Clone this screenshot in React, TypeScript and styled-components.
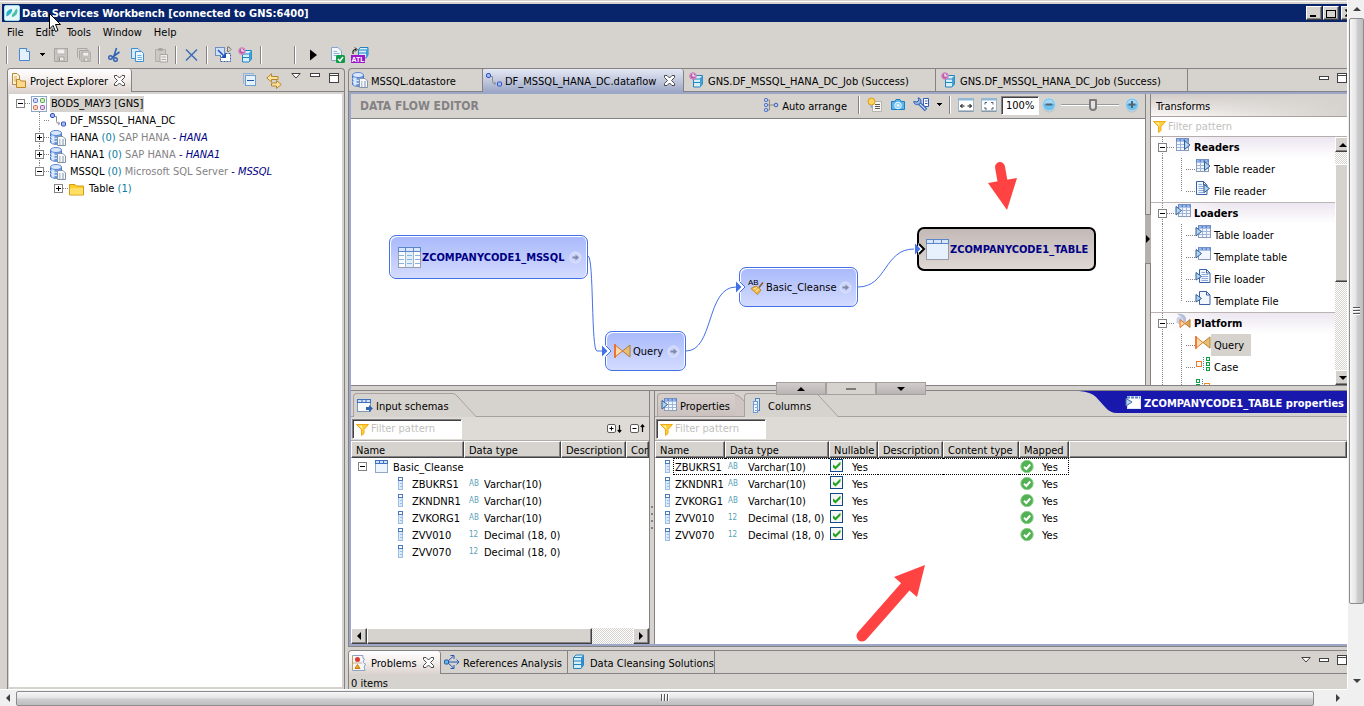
import React from "react";
import styled, { createGlobalStyle, css } from "styled-components";

const FACE = "#d6d3ce";
const LINE = "#848284";
const BLUE = "#9ca6c6";
const FONT = `"DejaVu Sans Condensed", "DejaVu Sans", sans-serif`;

const Global = createGlobalStyle`
  *, *::before, *::after { box-sizing: border-box; }
  html, body, #root { height: 100%; margin: 0; }
  body { overflow: hidden; font-family: ${FONT}; font-stretch: condensed; font-size: 11px; line-height: 16px; color: #000; background: #f0f0f0; }
  button, input { font: inherit; color: inherit; margin: 0; padding: 0; border: 0; background: none; border-radius: 0; }
  svg { display: block; flex: none; }
  table { border-collapse: separate; border-spacing: 0; table-layout: fixed; }
`;

const raised = css`
  background: ${FACE};
  border: 1px solid;
  border-color: #fff #424142 #424142 #fff;
  box-shadow: inset -1px -1px ${LINE};
`;
const dotsV = "repeating-linear-gradient(#848284 0 1px, transparent 1px 2px)";
const dotsH = "repeating-linear-gradient(90deg, #848284 0 1px, transparent 1px 2px)";

/* text beside an icon: sits slightly lower than the icon's middle */
const Text = styled.span`
  padding-top: 2px;
  line-height: 15px;
  white-space: nowrap;
`;

/* ---------- window frame ---------- */
const Frame = styled.div`
  display: grid;
  grid-template-columns: minmax(0, 1fr) 17px;
  grid-template-rows: minmax(0, 1fr) 17px;
  height: 100vh;
`;
const Main = styled.main`
  position: relative;
  display: flex;
  flex-direction: column;
  min-height: 0;
  padding: 4px 0 0 2px;
  background: ${FACE};
  box-shadow: inset 0 1px ${FACE}, inset 0 2px #fff;
  overflow: hidden;
`;
const TitleBar = styled.header`
  display: flex;
  align-items: center;
  flex: none;
  height: 18px;
  background: #08246b;
  color: #fff;
`;
const Title = styled.h1`
  flex: 1;
  margin: 0 0 0 2px;
  padding-top: 2px;
  font-size: 11px;
  line-height: 16px;
  white-space: nowrap;
`;
const WinButtons = styled.div`
  display: flex;
  gap: 1px;
  margin-right: -10px;
`;
const WinButton = styled.button<{ $gap?: boolean }>`
  ${raised}
  display: grid;
  place-items: center;
  width: 16px;
  height: 14px;
  margin-left: ${(p) => (p.$gap ? 1 : 0)}px;
`;
const MenuBar = styled.nav`
  display: flex;
  flex: none;
  gap: 12px;
  height: 20px;
  padding: 2px 0 0 5px;
  align-items: center;
`;
const ToolBar = styled.div`
  display: flex;
  flex: none;
  align-items: center;
  height: 26px;
  padding-left: 1px;
`;
const ToolButton = styled.button<{ $w?: number }>`
  display: grid;
  place-items: center;
  width: ${(p) => p.$w ?? 23}px;
  height: 22px;
`;
const Divider = styled.span`
  flex: none;
  width: 2px;
  height: 18px;
  margin: 0 3px;
  border-left: 1px solid ${LINE};
  border-right: 1px solid #fff;
`;
const Spacer = styled.span<{ $w?: number }>`
  flex: ${(p) => (p.$w ? `0 0 ${p.$w}px` : "1 1 0")};
`;
const Workspace = styled.div`
  display: flex;
  flex: 1;
  gap: 3px;
  min-height: 0;
  padding-left: 5px;
`;

/* ---------- panels and tabs ---------- */
const Panel = styled.section`
  display: flex;
  flex-direction: column;
  min-width: 0;
  min-height: 0;
  border: 1px solid ${LINE};
  border-bottom: 0;
  border-radius: 4px 4px 0 0;
`;
const Explorer = styled(Panel)`
  flex: 0 0 338px;
`;
const RightColumn = styled.div`
  display: flex;
  flex: 1;
  flex-direction: column;
  gap: 3px;
  min-width: 0;
`;
const TabStrip = styled.div`
  display: flex;
  flex: none;
  height: 23px;
`;
const Tab = styled.button<{ $w: number; $look?: "soft" | "blue"; $pad?: number }>`
  display: flex;
  align-items: center;
  gap: 3px;
  flex: 0 0 ${(p) => p.$w}px;
  padding-left: ${(p) => p.$pad ?? 3}px;
  border-right: 1px solid ${LINE};
  border-bottom: 1px solid ${LINE};
  white-space: nowrap;
  ${(p) =>
    p.$look === "soft" &&
    css`
      background: linear-gradient(#fff, #f4efed 45%, #dcd3cf);
      border-radius: 3px 3px 0 0;
      border-bottom: 0;
    `}
  ${(p) =>
    p.$look === "blue" &&
    css`
      background: linear-gradient(#e4e8f4, #c2c9de 50%, ${BLUE});
      border-bottom: 0;
      border-radius: 3px 3px 0 0;
    `}
`;
const TabClose = styled.span<{ $gap?: number }>`
  margin-left: ${(p) => p.$gap ?? 3}px;
`;
const StripRest = styled.div`
  display: flex;
  flex: 1;
  justify-content: flex-end;
  align-items: flex-start;
  gap: 9px;
  padding: 4px 5px 0 0;
  border-bottom: 1px solid ${LINE};
`;
const ViewButton = styled.button`
  display: block;
`;
const CutEdge = styled.div`
  display: flex;
  gap: 8px;
  margin-right: -5px;
`;

/* ---------- project explorer tree ---------- */
const ExplorerBody = styled.div`
  flex: 1;
  padding: 2px 2px 2px 1px;
`;
const Tree = styled.ul`
  height: 100%;
  margin: 0;
  padding: 1px 0 0 7px;
  list-style: none;
  background: #fff;
`;
const TreeRow = styled.li<{ $indent: number }>`
  display: flex;
  align-items: center;
  height: 17px;
  padding-left: ${(p) => p.$indent}px;
  white-space: nowrap;
`;
const Guide = styled.span<{ $line?: "full" | "top" }>`
  display: grid;
  place-items: center;
  flex: none;
  width: 9px;
  height: 100%;
  background: ${(p) => (p.$line ? `${dotsV} center top / 1px ${p.$line === "top" ? "50%" : "100%"} no-repeat` : "none")};
`;
const Dots = styled.span<{ $w: number }>`
  flex: 0 0 ${(p) => p.$w}px;
  height: 1px;
  background: ${dotsH};
`;
const TreeLabel = styled.span<{ $selected?: boolean }>`
  margin-left: 3px;
  padding: 0 1px;
  background: ${(p) => (p.$selected ? FACE : "none")};
`;
const Count = styled.span`
  color: #087da5;
`;
const Kind = styled.span`
  color: ${LINE};
`;
const Config = styled.span`
  color: #000084;
`;

/* ---------- editor ---------- */
const Editor = styled(Panel)`
  flex: 1;
  border-right: 0;
  border-bottom: 1px solid ${LINE};
  border-radius: 4px 0 0 0;
`;
const EditorFrame = styled.div`
  display: flex;
  flex: 1;
  flex-direction: column;
  min-height: 0;
  border: 2px solid ${BLUE};
  border-right: 0;
`;
const TopSplit = styled.div`
  display: flex;
  flex: 1;
  min-height: 0;
  border-bottom: 1px solid ${LINE};
`;
const FlowColumn = styled.div`
  display: flex;
  flex: 1;
  flex-direction: column;
  min-width: 0;
`;
const FlowHeader = styled.div`
  display: flex;
  flex: none;
  align-items: center;
  height: 25px;
  padding: 0 5px 2px 9px;
  border-bottom: 1px solid ${LINE};
`;
const FlowTitle = styled.h2`
  flex: 1;
  margin: 0;
  padding-top: 2px;
  font-size: 12px;
  color: ${LINE};
`;
const ArrangeButton = styled.button`
  display: flex;
  align-items: center;
  gap: 3px;
  margin-right: 8px;
`;
const ZoomBox = styled.input`
  width: 38px;
  height: 19px;
  margin: 0 2px 0 1px !important;
  padding-left: 4px !important;
  background: #fff !important;
  border: 1px solid !important;
  border-color: ${LINE} #fff #fff ${LINE} !important;
  box-shadow: inset 1px 1px #424142;
`;
const RoundButton = styled.button`
  display: block;
`;
const ZoomSlider = styled.input`
  appearance: none;
  width: 58px;
  height: 16px;
  margin: 0 5px 0 4px !important;
  background: linear-gradient(#9a9a9a 0 1px, #fff 1px 2px) center / 100% 2px no-repeat !important;
  &::-webkit-slider-thumb {
    appearance: none;
    width: 8px;
    height: 12px;
    border: 2px solid #7c7c7c;
    border-radius: 1px 1px 4px 4px;
    background: #e2e2e2;
  }
`;
const Canvas = styled.div`
  position: relative;
  flex: 1;
  min-height: 0;
  overflow: hidden;
  background: #fff;
`;
const Wires = styled.svg`
  position: absolute;
  top: 0;
  left: 0;
`;
const Node = styled.div<{ $x: number; $y: number; $w: number; $h: number; $selected?: boolean }>`
  position: absolute;
  left: ${(p) => p.$x}px;
  top: ${(p) => p.$y}px;
  display: flex;
  align-items: center;
  width: ${(p) => p.$w}px;
  height: ${(p) => p.$h}px;
  padding-left: 8px;
  border-radius: 7px;
  white-space: nowrap;
  ${(p) =>
    p.$selected
      ? css`
          border: 2px solid #000;
          background: linear-gradient(#c3bab7, #ded7d4);
          padding-left: 7px;
        `
      : css`
          border: 1px solid #4271e7;
          background: linear-gradient(#a9b9fb, #d3dbfe);
          box-shadow: inset 1px 1px #fff, inset -1px 0 #fff;
        `}
`;
const NodeName = styled.span<{ $table?: boolean }>`
  flex: 1;
  margin-left: ${(p) => (p.$table ? 1 : 2)}px;
  padding-top: 2px;
  color: ${(p) => (p.$table ? "#000084" : "#000")};
  font-weight: ${(p) => (p.$table ? 700 : 400)};
`;
const Notch = styled.svg`
  position: absolute;
  left: -6px;
  top: 50%;
  margin-top: -8px;
`;
const Port = styled.svg`
  margin-right: 5px;
`;

/* ---------- transforms palette ---------- */
const SideSash = styled.div`
  position: relative;
  flex: 0 0 6px;
  border-left: 1px solid ${LINE};
  border-right: 1px solid ${LINE};
`;
const SashHandle = styled.button`
  position: absolute;
  left: -1px;
  top: 120px;
  display: grid;
  place-items: center;
  width: 6px;
  height: 50px;
  background: #b4b0ae;
  border-top: 1px solid ${LINE};
  border-bottom: 1px solid ${LINE};
`;
const Palette = styled.aside`
  display: flex;
  flex: 0 0 196px;
  flex-direction: column;
  min-height: 0;
  background: #fff;
`;
const PaletteTitle = styled.h2`
  flex: none;
  margin: 0;
  height: 23px;
  padding-left: 5px;
  font-size: 11px;
  font-weight: 400;
  line-height: 26px;
  background: linear-gradient(90deg, transparent, ${FACE}), linear-gradient(#d2cbc7, #fbf8f7);
  border-bottom: 1px solid #a9a29e;
`;
const Filter = styled.label<{ $boxed?: boolean }>`
  display: flex;
  align-items: center;
  flex: none;
  gap: 2px;
  height: 20px;
  padding-left: 2px;
  background: #fff;
  input {
    min-width: 0;
    width: 100%;
    height: 16px;
    outline: 0;
  }
  input::placeholder {
    color: #c2bfbd;
    opacity: 1;
  }
  ${(p) =>
    p.$boxed
      ? css`
          width: 110px;
          padding: 1px 0 0 3px;
          border: 1px solid;
          border-color: ${LINE} #fff #fff ${LINE};
          box-shadow: inset 1px 1px #424142;
        `
      : css`
          border-bottom: 1px solid #b5aead;
        `}
`;
const PaletteScroll = styled.div`
  display: flex;
  flex: 1;
  min-height: 0;
  overflow: hidden;
`;
const PaletteTree = styled.ul`
  flex: 1;
  margin: -1px 0 0;
  padding: 0;
  list-style: none;
`;
const PaletteRow = styled.li<{ $group?: boolean }>`
  display: flex;
  align-items: center;
  height: 22px;
  padding-left: 7px;
  white-space: nowrap;
  ${(p) =>
    p.$group &&
    css`
      font-weight: 700;
      border-top: 1px solid #bab5b3;
      background: linear-gradient(90deg, #fff, transparent 40%), linear-gradient(#ece6f0, #fff);
    `}
`;
const PaletteLabel = styled.span<{ $selected?: boolean }>`
  height: 22px;
  padding: 0 7px 0 3px;
  line-height: 24px;
  background: ${(p) => (p.$selected ? FACE : "none")};
`;
const GroupLabel = styled.span`
  margin-left: 3px;
`;
const IconLift = styled.span`
  padding-bottom: 6px;
`;
const ScrollV = styled.div`
  display: flex;
  flex: 0 0 12px;
  flex-direction: column;
  overflow: hidden;
  background: conic-gradient(${FACE} 25%, #fff 0 50%, ${FACE} 0 75%, #fff 0) 0 0 / 2px 2px;
`;
const ScrollH = styled.div`
  display: flex;
  flex: none;
  height: 16px;
  background: conic-gradient(${FACE} 25%, #fff 0 50%, ${FACE} 0 75%, #fff 0) 0 0 / 2px 2px;
`;
const ScrollButton = styled.button`
  ${raised}
  display: grid;
  place-items: center;
  flex: none;
  width: 16px;
  height: 15px;
`;
const ScrollButtonH = styled(ScrollButton)`
  height: 16px;
`;
const ThumbV = styled.div`
  ${raised}
  flex: 0 0 118px;
  width: 16px;
  margin: 12px 0 auto;
`;
const ThumbH = styled.div`
  ${raised}
  flex: 1;
  margin-right: 41px;
`;

/* ---------- lower split ---------- */
const MainSash = styled.div`
  position: relative;
  flex: 0 0 5px;
  border-bottom: 1px solid ${LINE};
`;
const SashButtons = styled.div`
  position: absolute;
  z-index: 2;
  left: 425px;
  top: -4px;
  display: flex;
`;
const SashButton = styled.button<{ $flat?: boolean }>`
  display: grid;
  place-items: center;
  width: 50px;
  height: 13px;
  border: 1px solid #a5a09e;
  background: ${(p) => (p.$flat ? FACE : "linear-gradient(#d2cccb, #b9b4b3)")};
`;
const LowerSplit = styled.div`
  display: flex;
  flex: 0 0 253px;
`;
const Pane = styled.section`
  position: relative;
  display: flex;
  flex-direction: column;
  min-width: 0;
  overflow: hidden;
  background: #fff;
`;
const SchemaPane = styled(Pane)`
  flex: 0 0 298px;
`;
const ColumnPane = styled(Pane)`
  flex: 1;
`;
const SmallSash = styled.div`
  display: grid;
  place-items: center;
  flex: 0 0 6px;
  border-left: 1px solid ${LINE};
  border-right: 1px solid ${LINE};
`;
const Grip = styled.span`
  width: 2px;
  height: 24px;
  background: repeating-linear-gradient(${LINE} 0 2px, transparent 2px 7px);
`;
const SlantStrip = styled.div`
  display: flex;
  align-items: flex-end;
  flex: none;
  height: 26px;
  padding-left: 2px;
  background: linear-gradient(#a7a09e, #a7a09e) bottom / 100% 1px no-repeat ${FACE};
`;
const SlantTab = styled.button<{ $w: number; $front?: boolean }>`
  display: flex;
  align-items: center;
  gap: 3px;
  width: ${(p) => p.$w}px;
  height: ${(p) => (p.$front ? 24 : 23)}px;
  padding-left: 3px;
  margin-bottom: ${(p) => (p.$front ? 0 : 1)}px;
  border: 1px solid #a7a09e;
  border-width: 1px 0 0 1px;
  border-radius: 4px 0 0 0;
  white-space: nowrap;
  background: ${(p) => (p.$front ? FACE : "linear-gradient(#d8d0cd, #cbc2bf)")};
`;
const Banner = styled.div`
  display: flex;
  align-items: center;
  align-self: flex-start;
  height: 22px;
  margin-left: auto;
`;
const BannerText = styled.h2`
  display: flex;
  align-items: center;
  gap: 3px;
  margin: 0;
  height: 22px;
  padding: 0 3px 0 8px;
  font-size: 11px;
  color: #fff;
  background: #1818ad;
  white-space: nowrap;
`;
const FilterRow = styled.div`
  display: flex;
  align-items: center;
  flex: none;
  gap: 8px;
  height: 24px;
  padding: 0 4px 0 1px;
  background: #dedbd6;
  border-bottom: 1px solid #b0aaa8;
`;
const GridTable = styled.table<{ $w?: number }>`
  width: ${(p) => (p.$w ? `${p.$w}px` : "100%")};
  th {
    ${raised}
    height: 17px;
    padding: 2px 0 0 4px;
    font-weight: 400;
    line-height: 13px;
    text-align: left;
    white-space: nowrap;
    overflow: hidden;
  }
  td {
    height: 17px;
    padding: 0;
    white-space: nowrap;
  }
`;
const TableSlot = styled.div`
  flex: 1;
  min-height: 0;
  overflow: hidden;
`;
const Cell = styled.div<{ $pad?: number }>`
  display: flex;
  align-items: center;
  height: 17px;
  padding-left: ${(p) => p.$pad ?? 0}px;
`;
const FieldName = styled(Text)<{ $gap: number }>`
  margin-left: ${(p) => p.$gap}px;
`;
const FocusRow = styled.tr<{ $focus?: boolean }>`
  ${(p) =>
    p.$focus &&
    css`
      td {
        border-top: 1px dotted #000;
        border-bottom: 1px dotted #000;
      }
      td:first-child {
        border-color: transparent;
      }
      td:last-child {
        border-right: 1px dotted #000;
      }
      td > div {
        height: 15px;
      }
    `}
`;
const FocusName = styled.span<{ $focus?: boolean }>`
  flex: none;
  margin-left: 3px;
  padding: 1px 0 0 1px;
  height: 17px;
  width: 52px;
  border: ${(p) => (p.$focus ? "1px dotted #000" : "1px solid transparent")};
  border-right: 0;
  line-height: 15px;
`;
const TypeMark = styled.span`
  width: 15px;
  font-size: 8px;
  line-height: 14px;
  color: #5aa0b5;
`;
const Check = styled.input`
  appearance: none;
  display: grid;
  place-items: center;
  width: 13px;
  height: 13px;
  margin: 0 9px 2px 1px !important;
  border: 1px solid #10498c !important;
  background: #f5f5f3 !important;
  &:checked::before {
    content: "";
    width: 8px;
    height: 8px;
    background: #21a221;
    clip-path: polygon(0 30%, 38% 62%, 100% 0, 100% 38%, 38% 100%, 0 68%);
  }
`;

/* ---------- problems ---------- */
const Problems = styled(Panel)`
  flex: 0 0 39px;
  border-right: 0;
  border-radius: 4px 0 0 0;
`;
const Items = styled.p`
  margin: 0;
  padding: 2px 0 0 2px;
`;

/* ---------- outer scroll bars ---------- */
const OuterV = styled.div`
  display: flex;
  flex-direction: column;
  align-items: flex-end;
  background: #f0f0f0;
  border-left: 1px solid #fff;
`;
const OuterH = styled.div`
  display: flex;
  align-items: center;
  min-width: 0;
  background: #f0f0f0;
  border-top: 1px solid #fff;
`;
const OuterArrow = styled.button<{ $w: number; $h: number }>`
  display: grid;
  place-items: center;
  flex: none;
  width: ${(p) => p.$w}px;
  height: ${(p) => p.$h}px;
`;
const OuterThumb = styled.div<{ $side?: boolean }>`
  display: flex;
  align-items: center;
  justify-content: center;
  border: 1px solid #8c8c8e;
  border-radius: 2px;
  ${(p) =>
    p.$side
      ? css`
          flex: 586 0 0;
          width: 15px;
          background: linear-gradient(90deg, #f7f7f7, #e3e3e4 48%, #cfcfd1 52%, #bebec1);
        `
      : css`
          flex: 1299 0 0;
          height: 15px;
          background: linear-gradient(#f7f7f7, #e3e3e4 48%, #cfcfd1 52%, #bebec1);
        `}
`;
const OuterRest = styled.span<{ $n: number }>`
  flex: ${(p) => p.$n} 0 0;
`;
const Pointer = styled.svg`
  position: absolute;
  left: 49px;
  top: 13px;
  z-index: 5;
`;
const RedArrow = styled.svg<{ $x: number; $y: number }>`
  position: absolute;
  left: ${(p) => p.$x}px;
  top: ${(p) => p.$y}px;
  pointer-events: none;
`;

/* ---------- icons ---------- */
type IconProps = { children: React.ReactNode; w?: number; h?: number; crisp?: boolean };
const Icon = ({ children, w = 16, h = 16, crisp }: IconProps) => (
  <svg width={w} height={h} viewBox={`0 0 ${w} ${h}`} fill="none" aria-hidden="true" shapeRendering={crisp ? "crispEdges" : undefined}>
    {children}
  </svg>
);
const Logo = () => (
  <Icon>
    <rect x=".5" y=".5" width="15" height="15" rx="1.5" fill="#e6f7fb" stroke="#9fd8e8" />
    <path d="M2.500 11.500C1.500 7 4 4.500 8 4 8.500 6.500 7 8 6 9 5 10 4 11 2.500 11.500Z" fill="#29b0c9" />
    <path d="M8 12C7.500 9 9 8.500 10 7.500 11 6.500 11 4 13 3.500 14.500 8 12 11.500 8 12Z" fill="#4fc0a8" />
  </Icon>
);
const Caret = () => (
  <Icon w={7} h={4} crisp>
    <path d="M1 0H6L3.500 3Z" fill="#000" />
  </Icon>
);
const Tri = ({ d, c = "#000" }: { d: "up" | "down" | "left" | "right"; c?: string }) => {
  const p = { up: "M0 6L4 2 8 6Z", down: "M0 2H8L4 6Z", left: "M6 0V8L2 4Z", right: "M2 0V8L6 4Z" }[d];
  return (
    <Icon w={8} h={8}>
      <path d={p} fill={c} />
    </Icon>
  );
};
const CloseX = () => (
  <Icon w={11} h={11}>
    <path d="M.5.5H3L5.500 3 8 .5H10.500V2.500L7.500 5.500 10.500 8.500V10.500H8L5.500 8 3 10.500H.5V8.500L3.500 5.500.5 2.500Z" fill="#fff" stroke="#4a494a" />
  </Icon>
);
const MenuTri = () => (
  <Icon w={10} h={6}>
    <path d="M.8.5H9.200L5 5Z" fill="#fff" stroke="#424142" />
  </Icon>
);
const MinBox = () => (
  <Icon w={10} h={5} crisp>
    <rect x=".5" y=".5" width="9" height="3" fill="#fff" stroke="#424142" />
  </Icon>
);
const MaxBox = () => (
  <Icon w={10} h={10} crisp>
    <path d="M.5.5H9.500V9.500H.5ZM.5 2.500H9.500" fill="#fff" stroke="#424142" />
  </Icon>
);
const PageIcon = () => (
  <Icon>
    <path d="M2.500 1.500H9.500L12.500 4.500V13.500H2.500Z" fill="#e3f1fd" stroke="#4a86cd" />
    <path d="M9.500 1.500V4.500H12.500" fill="#fff" stroke="#4a86cd" />
  </Icon>
);
const Floppy = ({ many }: { many?: boolean }) => (
  <Icon>
    {many && <path d="M1.500 10.500V1.500H11V3M3.500 12.500V3.500H13" stroke="#a9a6a3" />}
    <g transform={many ? "translate(4 4) scale(.72)" : undefined}>
      <path d="M1.500 1.500H14.500V14.500H1.500Z" fill="#c9c6c2" stroke="#a5a29f" />
      <path d="M4 2H12V7H4Z" fill="#f2f0ee" stroke="#b5b2af" />
      <path d="M5 10H11V14H5Z" fill="#eceae7" stroke="#a5a29f" />
      <path d="M6.500 11V13.500" stroke="#8d8a87" />
    </g>
  </Icon>
);
const Scissors = () => (
  <Icon>
    <path d="M9.500 1 6.500 10.500M12.500 5 5 10.500" stroke="#2f62b5" strokeWidth="1.600" />
    <circle cx="3.500" cy="10.500" r="1.800" stroke="#2f62b5" strokeWidth="1.400" />
    <circle cx="8.500" cy="12.500" r="1.800" stroke="#2f62b5" strokeWidth="1.400" />
  </Icon>
);
const CopyIcon = () => (
  <Icon>
    <path d="M1.500 1.500H8L10.500 4V11.500H1.500Z" fill="#d8ebfb" stroke="#3f8fd0" />
    <path d="M5.500 4.500H11.500L13.500 6.500V14.500H5.500Z" fill="#eaf5fe" stroke="#3f8fd0" />
    <path d="M7.500 8.500H11.500M7.500 10.500H12M7.500 12.500H12" stroke="#6fb1e0" />
  </Icon>
);
const PasteIcon = () => (
  <Icon>
    <path d="M2.500 2.500H12.500V14.500H2.500Z" fill="#cbc8c4" stroke="#b0ada9" />
    <path d="M5.500 1H9.500V4H5.500Z" fill="#a9a6a2" />
    <path d="M7 7.500H14.500V15H7Z" fill="#efedea" stroke="#a8a5a1" />
    <path d="M8.500 10H13M8.500 12.500H13" stroke="#b0ada9" />
  </Icon>
);
const DeleteX = () => (
  <Icon>
    <path d="M2 2.500 13 13.500M13 2.500 2 13.500" stroke="#3d6cb0" strokeWidth="1.500" />
  </Icon>
);
const LinkObj = () => (
  <Icon w={18} h={18}>
    <rect x="1.500" y="1.500" width="9" height="8" fill="#cfe0f8" stroke="#6f8fbe" />
    <path d="M6.500 9.500V15.500H16.500V7.500H10" fill="#fff" stroke="#2e5aa8" strokeDasharray="2 1" />
    <path d="M4 4 9.500 9.500" stroke="#1f55b8" strokeWidth="1.500" />
    <path d="M12 6.500V12H6.500Z" fill="#1f55b8" />
    <path d="M13.500 1V5.500H15L17 3.500 15 1Z" fill="#d8d5d1" stroke="#77746f" />
  </Icon>
);
const JobIcon = () => (
  <Icon>
    <path d="M4.500 5 6 3.500H13.500V12L11 15H4.500Z" fill="#d6effc" stroke="#2482bd" />
    <path d="M11 6 13.500 3.500V12L11 15Z" fill="#3f9fd8" />
    <path d="M4.500 7H11M4.500 10.500H11" stroke="#2482bd" />
    <circle cx="4" cy="4" r="3.500" fill="#b85aa6" />
    <path d="M4 1.500V4H6.500" stroke="#fff" strokeWidth="1.200" />
    <circle cx="4" cy="4" r="3.200" stroke="#d994cb" />
  </Icon>
);
const Play = () => (
  <Icon>
    <path d="M4 2.500V13.500L11 8Z" fill="#000" />
  </Icon>
);
const DocCheck = () => (
  <Icon>
    <path d="M2.500.5H9L12.500 4V13.500H2.500Z" fill="#f1f7fd" stroke="#85a6c9" />
    <path d="M4.500 4.500H8M4.500 6.500H10.500M4.500 8.500H9" stroke="#8fb2d4" />
    <rect x="7" y="8" width="9" height="8" rx="1.500" fill="#0f9b49" />
    <path d="M9 12 11 14 14 10" stroke="#fff" strokeWidth="1.500" />
  </Icon>
);
const AtlIcon = () => (
  <Icon w={18} h={18}>
    <path d="M7.500 4 9 1.500H17V9L15 12H7.500Z" fill="#d6effc" stroke="#2482bd" />
    <path d="M15 4 17 1.500V9L15 12Z" fill="#3f9fd8" />
    <path d="M7.500 4H15M7.500 7H15" stroke="#2482bd" />
    <path d="M2 8V5Q2 3.500 5 3.500M4 1.500 6 3.500 4 5.500" stroke="#000" />
    <rect x="0" y="9" width="14" height="8" fill="#9c18ce" />
    <text x="7" y="16" fontSize="7" fontWeight="700" fill="#fff" textAnchor="middle" fontFamily="Liberation Sans, sans-serif">ATL</text>
  </Icon>
);
const ExplorerIcon = () => (
  <Icon>
    <path d="M1.500.5H6L8.500 3V11.500H1.500Z" fill="#fdf4e0" stroke="#b98a34" />
    <path d="M3 4H6M3 6H6M3 8H5" stroke="#d3a85b" />
    <path d="M5.500 6.500H9L10 8H14.500V14.500H5.500Z" fill="#fbd98a" stroke="#b9842a" />
  </Icon>
);
const CollapseAll = () => (
  <Icon w={14} h={14} crisp>
    <path d="M.5 10.500V.5H10.500" fill="none" stroke="#8db4e0" />
    <rect x="2.500" y="2.500" width="10" height="10" fill="#e6f2fd" stroke="#6f9fd0" />
    <path d="M4 7.500H11" stroke="#1c5aa6" />
  </Icon>
);
const SyncIcon = () => (
  <Icon>
    <path d="M5.500.8V3.500H12V6.500H5.500V9L.8 5Z" fill="#fde2a0" stroke="#b9842a" />
    <path d="M10.500 7.500V10H5.500V13H10.500V15.500L15.200 11.500Z" fill="#fde2a0" stroke="#b9842a" />
  </Icon>
);
const RepoIcon = () => (
  <Icon>
    <rect x=".5" y=".5" width="15" height="15" fill="#f7fafd" stroke="#8da7c4" />
    <rect x="2.500" y="2.500" width="4" height="4" rx="1" fill="#cfd9ff" stroke="#5c6fc9" />
    <rect x="9.500" y="2.500" width="4" height="4" rx="1" fill="#c9efc0" stroke="#54a144" />
    <rect x="2.500" y="9.500" width="4" height="4" rx="1" fill="#ffd2c2" stroke="#c9714f" />
    <rect x="9.500" y="9.500" width="4" height="4" rx="1" fill="#e8c9ef" stroke="#9557a6" />
  </Icon>
);
const FlowIcon = () => (
  <Icon>
    <rect x=".5" y=".5" width="4" height="4" rx="1.500" fill="#a9c0f5" stroke="#2e50c0" />
    <path d="M5 3.500H6.500V8.500Q6.500 10.500 9 10.500M8.200 8.800 10 10.500 8.200 12.200" stroke="#8d8d90" />
    <rect x="11.500" y="9" width="4" height="4" rx="1" fill="#a9c0f5" stroke="#2e50c0" />
  </Icon>
);
const DatastoreIcon = () => (
  <Icon>
    <path d="M.5 3V12C.5 15 11.500 15 11.500 12V3Z" fill="#6d9be3" stroke="#4a74c4" />
    <path d="M3 4V13.500" stroke="#d5e5fb" strokeWidth="3" />
    <ellipse cx="6" cy="3" rx="5.500" ry="2.500" fill="#dbe8fc" stroke="#5f8ad4" />
    <path d="M.5 6.500C1 9 11 9 11.500 6.500M.5 9.500C1 12 11 12 11.500 9.500" stroke="#e8f1fe" />
    <path d="M7.500 6.500H13L15.500 9V15.500H7.500Z" fill="#f6f8fb" stroke="#8293a8" />
    <path d="M9 10H10.500M12 10H14M9 12H10.500M12 12H14M9 14H10.500M12 14H14" stroke="#8293a8" />
  </Icon>
);
const Folder = () => (
  <Icon>
    <path d="M.5 3.500H6L7.500 5H14.500V14H.5Z" fill="#ffce2e" stroke="#d49a10" />
    <path d="M1 7H14V13.500H1Z" fill="#ffdf66" />
  </Icon>
);
const Toggle = ({ open }: { open?: boolean }) => (
  <Icon w={9} h={9} crisp>
    <rect x=".5" y=".5" width="8" height="8" fill="#fff" stroke="#848284" />
    <path d={open ? "M2 4.500H7" : "M2 4.500H7M4.500 2V7"} stroke="#000" />
  </Icon>
);
const Funnel = () => (
  <Icon w={13} h={13}>
    <path d="M.5 1.500H12.500L8 6.500V10.500L5.500 12.500V6.500Z" fill="#ffcf31" stroke="#f0a818" />
    <path d="M2.500 2.500H6L6.500 6Z" fill="#fff0b0" />
  </Icon>
);
const ArrangeIcon = () => (
  <Icon>
    <path d="M4 3H6.500V13H4M4 8H11" stroke="#8a8a8c" />
    <g fill="#b9ccf5" stroke="#3b62b8">
      <rect x="1.500" y="1.500" width="3" height="3" rx="1" />
      <rect x="1.500" y="6.500" width="3" height="3" rx="1" />
      <rect x="1.500" y="11.500" width="3" height="3" rx="1" />
      <circle cx="13" cy="8" r="1.800" />
    </g>
  </Icon>
);
const BulbList = () => (
  <Icon>
    <path d="M5.500 4.500H14.500V14.500H5.500Z" fill="#f6f4f0" stroke="#b5b2af" />
    <path d="M8 7.500H13M8 9.500H13M8 11.500H13" stroke="#5d5b58" />
    <circle cx="4.500" cy="4.500" r="3.500" fill="#ffd45a" stroke="#d99a1c" />
    <path d="M3.500 8.500H5.500V10.500H3.500Z" fill="#8fa3bd" />
  </Icon>
);
const Camera = () => (
  <Icon>
    <path d="M1.500 4.500H5L6 2.500H10L11 4.500H14.500V12.500H1.500Z" fill="#5fb4ec" stroke="#1f7fc4" />
    <circle cx="8" cy="8.500" r="3.300" fill="#8fd0f4" stroke="#e6f6fe" />
    <circle cx="8" cy="8.500" r="1.400" fill="#e6f6fe" />
  </Icon>
);
const Wrench = () => (
  <Icon>
    <path d="M6 6 13 13" stroke="#2f5fb5" strokeWidth="3.500" />
    <path d="M6.500 6.500 12.500 12.500" stroke="#c7dcfa" strokeWidth="1.200" />
    <path d="M.8 4.500C.8 7.500 4 8.500 6.500 7L7.800 5.500C8.500 3 7 .8 5 .8L6 3 4 5Z" fill="#8fb2ea" stroke="#2f5fb5" />
    <path d="M10.500 1.500H15.500V9.500H12L10.500 8Z" fill="#fff" stroke="#2f5fb5" />
    <path d="M12 4H14.500M12 6.500H14.500" stroke="#2f5fb5" />
  </Icon>
);
const FitWidth = ({ page }: { page?: boolean }) => (
  <Icon>
    <rect x=".5" y="1.500" width="15" height="13" fill="#fff" stroke="#9db3c7" />
    <path d="M1 2.500H15" stroke="#8bb8db" strokeWidth="2" />
    <path d="M1 14H15" stroke="#6f8294" />
    {page ? (
      <path d="M4 7.500V5.500H6M10 5.500H12V7.500M12 10V12H10M6 12H4V10" stroke="#4c5d6d" />
    ) : (
      <path d="M2.500 9H6.500M9.500 9H13.500M4.500 7 2.500 9 4.500 11M11.500 7 13.500 9 11.500 11" stroke="#000" />
    )}
  </Icon>
);
const Round = ({ plus }: { plus?: boolean }) => (
  <Icon>
    <circle cx="8" cy="9" r="6.500" fill="#b4bec6" />
    <circle cx="8" cy="7.500" r="6.500" fill="#6fc1ee" stroke="#cfdbe3" />
    <path d="M3 7A5 4.500 0 0 1 13 7Z" fill="#a4d9f7" />
    <path d={plus ? "M4.500 7.500H11.500M8 4V11" : "M4.500 7.500H11.500"} stroke="#4f6475" strokeWidth="2" />
  </Icon>
);
type GridKind = "reader" | "loader" | "template";
const TableIcon = ({ kind }: { kind: GridKind }) => {
  const x = kind === "reader" ? 1.5 : 3.5;
  return (
    <Icon>
      <rect x={x} y="1.500" width="12" height="12" fill="#f3f7fd" stroke="#8a9cba" />
      <path d={`M${x - 0.5} 3H${x + 12.5}`} stroke="#5c86cf" strokeWidth="3" />
      <path d={`M${x + 0.5} 3H${x + 3}M${x + 4.5} 3H${x + 7}M${x + 8.5} 3H${x + 11}`} stroke="#d9e6fa" />
      {kind !== "template" && <path d={`M${x + 4} 4.500V13M${x + 8} 4.500V13M${x + 0.5} 7.500H${x + 11.5}M${x + 0.5} 10.500H${x + 11.5}`} stroke="#9fb6dc" />}
      <path d={kind === "reader" ? "M9.500 3.500V12.500L15 8Z" : "M1 3.500V12L6.500 7.500Z"} fill="#b4d3f0" stroke="#2f5f96" />
    </Icon>
  );
};
const FileIcon = ({ kind }: { kind: GridKind }) => {
  const x = kind === "reader" ? 1.5 : 4.5;
  return (
    <Icon>
      <path d={`M${x} 1.500H${x + 7}L${x + 10.5} 5V14.500H${x}Z`} fill="#f2f7fe" stroke="#3b62a8" />
      <path d={`M${x + 7} 1.500V5H${x + 10.5}`} stroke="#3b62a8" />
      {kind !== "template" && <path d={`M${x + 2} 4.500H${x + 5.5}M${x + 2} 6.500H${x + 8.5}M${x + 2} 8.500H${x + 8.5}M${x + 2} 10.500H${x + 8.5}M${x + 2} 12.500H${x + 8.5}`} stroke="#8fa9d8" />}
      <path d={kind === "reader" ? "M9 4.500V12.500L14.500 8.500Z" : "M1 4.500V12L6.500 8.500Z"} fill="#b4d3f0" stroke="#2f5f96" />
    </Icon>
  );
};
const BowTie = ({ w = 17 }: { w?: number }) => (
  <svg width={w} height={w - 1} viewBox="0 0 17 16" aria-hidden="true">
    <path d="M1 2 8.500 8 1 14Z" fill="#ffdcae" stroke="#e2741c" />
    <path d="M16 2 8.500 8 16 14Z" fill="#e8bd74" stroke="#b07c2c" />
    <path d="M1 1V15" stroke="#f0641a" strokeWidth="1.500" />
  </svg>
);
const PlatformIcon = () => (
  <Icon>
    <path d="M2 1Q9 0 11 5V9H8Q9 4 2 1ZM1 9Q4 12 7 9L5 7Z" fill="#b3bfda" />
    <circle cx="5" cy="7" r="3.500" fill="#c9d3ea" />
    <path d="M5 6.500 10 10.500 5 14.500Z" fill="#ffd9a8" stroke="#e86a1a" />
    <path d="M15 6.500 10 10.500 15 14.500Z" fill="#e0a850" stroke="#b87a28" />
  </Icon>
);
const CaseIcon = () => (
  <Icon crisp>
    <rect x="1.500" y="5.500" width="5" height="5" fill="#fff" stroke="#f07a2a" />
    <path d="M8.500 1V15" stroke="#3b8ac4" strokeDasharray="1 1" />
    <rect x="11.500" y="1.500" width="3" height="3" fill="#fff" stroke="#10a040" />
    <rect x="11.500" y="6.500" width="3" height="3" fill="#fff" stroke="#10a040" />
    <rect x="11.500" y="11.500" width="3" height="3" fill="#fff" stroke="#10a040" />
  </Icon>
);
const MergeIcon = () => (
  <Icon crisp>
    <rect x="1.500" y="1.500" width="3" height="3" fill="#fff" stroke="#10a040" />
    <rect x="1.500" y="6.500" width="3" height="3" fill="#fff" stroke="#10a040" />
    <path d="M7.500 1V15" stroke="#3b8ac4" strokeDasharray="1 1" />
    <rect x="9.500" y="5.500" width="5" height="5" fill="#fff" stroke="#f08a2a" />
  </Icon>
);
const BigTable = ({ empty }: { empty?: boolean }) => (
  <svg width="23" height="21" viewBox="0 0 23 21" aria-hidden="true" shapeRendering="crispEdges">
    <rect x=".5" y=".5" width="22" height="20" fill={empty ? "#e6f1fd" : "#fafcff"} stroke="#9a9ca6" />
    {!empty && <path d="M8 5H15V20H8Z" fill="#e0effb" />}
    <rect x=".5" y=".5" width="22" height="4" fill="#d7e6fa" stroke="#5b86c8" />
    <path d="M7.500 1V4M15.500 1V4" stroke="#5b86c8" fill="none" />
    {!empty && <path d="M7.500 5V20M15.500 5V20" stroke="#aab2bf" fill="none" />}
    {!empty && <path d="M1 8.500H22M1 12.500H22M1 16.500H22" stroke="#86b4dd" strokeDasharray="5 3" fill="none" />}
  </svg>
);
const SchemaTable = () => (
  <Icon w={14} h={14} crisp>
    <rect x=".5" y=".5" width="12" height="12" fill="#eef4fc" stroke="#93a7c2" />
    <rect x=".5" y=".5" width="12" height="3" fill="#cfe0f8" stroke="#3f6fbd" />
    <path d="M4.500 1V4M8.500 1V4" stroke="#3f6fbd" />
  </Icon>
);
const SchemaTabIcon = () => (
  <Icon>
    <rect x=".5" y="1.500" width="13" height="12" fill="#f6f9fd" stroke="#7f96b5" />
    <rect x=".5" y="1.500" width="13" height="3" fill="#cfe0f8" stroke="#3f6fbd" />
    <path d="M5 2V4M9 2V4" stroke="#3f6fbd" />
    <path d="M9 9H12V7L16 10.500 12 14V12H9Z" fill="#2f62b5" />
  </Icon>
);
const BannerIcon = () => (
  <Icon>
    <rect x="2.500" y="2.500" width="13" height="12" fill="#fff" stroke="#dce8f8" />
    <path d="M2 3.500H15" stroke="#5b86c8" strokeWidth="2" strokeDasharray="3 1" />
    <path d="M1 4.500V12L7 8Z" fill="#b4d3f0" stroke="#49719e" />
  </Icon>
);
const FieldIcon = () => (
  <Icon w={5} h={13} crisp>
    <rect x=".5" y=".5" width="4" height="12" fill="#dcebfa" stroke="#9cbde6" />
    <rect x=".5" y=".5" width="4" height="3" fill="#fff" stroke="#4a78be" />
    <path d="M2 6.500H4M2 9.500H4" stroke="#9cbde6" />
  </Icon>
);
const ColumnsIcon = () => (
  <Icon w={9} h={15} crisp>
    <path d="M3.500.5H7.500V12H3.500Z" fill="#dcebfa" stroke="#4f7fc0" />
    <path d="M1.500 3.500H5.500V14.500H1.500Z" fill="#eef5fd" stroke="#6f9ad2" />
    <path d="M2 6.500H5.500M3 9.500H5.500M3 12H5.500" stroke="#84a9d8" />
  </Icon>
);
const Expand = ({ up }: { up?: boolean }) => (
  <Icon w={15} h={11}>
    <rect x=".5" y="1.500" width="8" height="8" rx="1.500" fill="#fff" stroke="#5f5d5b" />
    <path d={up ? "M2.500 5.500H6.500" : "M2.500 5.500H6.500M4.500 3.500V7.500"} stroke="#000" />
    <path d={up ? "M12.500 9V2M10.800 4 12.500 2 14.200 4" : "M12.500 2V9M10.800 7 12.500 9 14.200 7"} stroke="#000" strokeWidth="1.200" />
  </Icon>
);
const GreenTick = () => (
  <Icon w={14} h={14}>
    <circle cx="7" cy="6.500" r="6.200" fill="#52b152" stroke="#8fce8c" />
    <path d="M4 6.800 6.300 9 10.200 4.500" stroke="#fff" strokeWidth="2" />
  </Icon>
);
const Broom = () => (
  <Icon w={16} h={18}>
    <text x="0" y="7" fontSize="8" fill="#000" fontFamily="Liberation Sans, sans-serif">AB</text>
    <path d="M15 4.500 11 9.500" stroke="#8d5a1c" strokeWidth="1.500" />
    <path d="M8 8 13 12 9.500 16.500 3 10.500Z" fill="#f5b942" stroke="#c28a28" />
    <path d="M5.500 11 9 9.500M7.500 13.500 11 11" stroke="#fff0c0" />
  </Icon>
);
const ProblemsIcon = () => (
  <Icon>
    <path d="M.5.5H11Q10 4 12.500 4 9.500 8 13.500 9 11 12 13 15.500H.5Z" fill="#f5f7fb" stroke="#8fa3c4" />
    <circle cx="5.500" cy="4.500" r="2.500" fill="#e03838" />
    <path d="M.5 8H10" stroke="#c0b088" />
    <path d="M5.500 9.500 8 13.500H3Z" fill="#f5a623" stroke="#c47d10" />
    <path d="M.5 15V1" stroke="#c0a060" />
  </Icon>
);
const RefsIcon = () => (
  <Icon>
    <path d="M4 8H15M12.500 5.500 15 8 12.500 10.500M4 7 9.500 2M6.500 1.500H10V5M4 9 9.500 14M6.500 14.500H10V11" stroke="#1f55b8" />
    <rect x=".5" y="6" width="4" height="4" rx="1" fill="#6fb6e8" stroke="#1c5aa6" />
  </Icon>
);
const CleanseIcon = () => (
  <Icon>
    <path d="M2.500 3.500 5 1H12.500V11L10 14.500H2.500Z" fill="#d6effc" stroke="#2482bd" />
    <path d="M10 3.500 12.500 1V11L10 14.500Z" fill="#2f8fd0" />
    <path d="M2.500 3.500H10M2.500 7H10M2.500 10.500H10" stroke="#2482bd" />
  </Icon>
);

/* ---------- composed parts ---------- */
const PortArrow = () => (
  <Port width="13" height="13" viewBox="0 0 13 13" fill="none" aria-hidden="true">
    <circle cx="6.500" cy="6.500" r="5.500" fill="#cdd6fb" stroke="#dfe5fd" />
    <path d="M3.500 6.500H7" stroke="#8087a8" strokeWidth="2" />
    <path d="M6.500 3.500V9.500L10 6.500Z" fill="#8087a8" />
  </Port>
);
const InNotch = ({ dark }: { dark?: boolean }) => (
  <Notch width="14" height="16" viewBox="0 0 14 16" fill="none">
    <path d="M5 2 11 8 5 14Z" fill="#fff" />
    <path d="M6 3 11 8 6 13" stroke={dark ? "#000" : "#4271e7"} strokeWidth={dark ? 2 : 1} />
    <path d="M2 2.500 7.500 8 2 13.500Z" fill="#4271e7" />
  </Notch>
);

type Field = { name: string; mark: string; type: string };
const fields: Field[] = [
  { name: "ZBUKRS1", mark: "AB", type: "Varchar(10)" },
  { name: "ZKNDNR1", mark: "AB", type: "Varchar(10)" },
  { name: "ZVKORG1", mark: "AB", type: "Varchar(10)" },
  { name: "ZVV010", mark: "12", type: "Decimal (18, 0)" },
  { name: "ZVV070", mark: "12", type: "Decimal (18, 0)" },
];

const stores = [
  { name: "HANA", kind: "SAP HANA" },
  { name: "HANA1", kind: "SAP HANA" },
  { name: "MSSQL", kind: "Microsoft SQL Server" },
];

type Item = { name: string; icon: React.ReactNode; selected?: boolean };
const groups: { name: string; icon: React.ReactNode; items: Item[] }[] = [
  {
    name: "Readers",
    icon: <TableIcon kind="reader" />,
    items: [
      { name: "Table reader", icon: <TableIcon kind="reader" /> },
      { name: "File reader", icon: <FileIcon kind="reader" /> },
    ],
  },
  {
    name: "Loaders",
    icon: <TableIcon kind="loader" />,
    items: [
      { name: "Table loader", icon: <TableIcon kind="loader" /> },
      { name: "Template table", icon: <TableIcon kind="template" /> },
      { name: "File loader", icon: <FileIcon kind="loader" /> },
      { name: "Template File", icon: <FileIcon kind="template" /> },
    ],
  },
  {
    name: "Platform",
    icon: <PlatformIcon />,
    items: [
      { name: "Query", icon: <BowTie w={16} />, selected: true },
      { name: "Case", icon: <CaseIcon /> },
      { name: "", icon: <MergeIcon /> },
    ],
  },
];

const ProjectExplorer = () => (
  <Explorer>
    <TabStrip>
      <Tab $w={124} $look="soft">
        <ExplorerIcon />
        <Text>Project Explorer</Text>
        <TabClose><CloseX /></TabClose>
      </Tab>
      <StripRest>
        <ViewButton aria-label="Collapse all"><CollapseAll /></ViewButton>
        <ViewButton aria-label="Link with editor"><SyncIcon /></ViewButton>
        <ViewButton aria-label="View menu"><MenuTri /></ViewButton>
        <ViewButton aria-label="Minimize"><MinBox /></ViewButton>
        <ViewButton aria-label="Maximize"><MaxBox /></ViewButton>
      </StripRest>
    </TabStrip>
    <ExplorerBody>
      <Tree>
        <TreeRow $indent={0}>
          <Guide><Toggle open /></Guide>
          <Dots $w={6} />
          <RepoIcon />
          <TreeLabel $selected>BODS_MAY3 [GNS]</TreeLabel>
        </TreeRow>
        <TreeRow $indent={19}>
          <Guide $line="full" />
          <Dots $w={6} />
          <FlowIcon />
          <TreeLabel>DF_MSSQL_HANA_DC</TreeLabel>
        </TreeRow>
        {stores.map((s, i) => (
          <TreeRow key={s.name} $indent={19}>
            <Guide $line={i === 2 ? "top" : "full"}><Toggle open={i === 2} /></Guide>
            <Dots $w={6} />
            <DatastoreIcon />
            <TreeLabel>
              {s.name} <Count>(0)</Count> <Kind>{s.kind}</Kind> <Config>- <i>{s.name}</i></Config>
            </TreeLabel>
          </TreeRow>
        ))}
        <TreeRow $indent={38}>
          <Guide><Toggle /></Guide>
          <Dots $w={6} />
          <Folder />
          <TreeLabel>Table <Count>(1)</Count></TreeLabel>
        </TreeRow>
      </Tree>
    </ExplorerBody>
  </Explorer>
);

const FlowEditor = () => (
  <FlowColumn>
    <FlowHeader>
      <FlowTitle>DATA FLOW EDITOR</FlowTitle>
      <ArrangeButton><ArrangeIcon /><Text>Auto arrange</Text></ArrangeButton>
      <Divider />
      <ToolButton aria-label="Validation"><BulbList /></ToolButton>
      <ToolButton aria-label="Snapshot"><Camera /></ToolButton>
      <ToolButton aria-label="Settings"><Wrench /></ToolButton>
      <ToolButton $w={14} aria-label="More settings"><Caret /></ToolButton>
      <Divider />
      <ToolButton aria-label="Fit width"><FitWidth /></ToolButton>
      <ToolButton aria-label="Fit page"><FitWidth page /></ToolButton>
      <ZoomBox aria-label="Zoom" defaultValue="100%" />
      <RoundButton aria-label="Zoom out"><Round /></RoundButton>
      <ZoomSlider type="range" aria-label="Zoom level" defaultValue={55} />
      <RoundButton aria-label="Zoom in"><Round plus /></RoundButton>
    </FlowHeader>
    <Canvas>
      <Wires width="800" height="266" viewBox="351 119 800 266" fill="none" stroke="#4271e7">
        <path d="M588 256C594 257 591 351 597 351H602" />
        <path d="M686 351C714 351 706 287 736 287" />
        <path d="M858 287C887 287 884 249 914 249" />
      </Wires>
      <Node $x={38} $y={116} $w={199} $h={44}>
        <BigTable />
        <NodeName $table>ZCOMPANYCODE1_MSSQL</NodeName>
        <PortArrow />
      </Node>
      <Node $x={254} $y={212} $w={81} $h={40}>
        <InNotch />
        <BowTie />
        <NodeName>Query</NodeName>
        <PortArrow />
      </Node>
      <Node $x={388} $y={148} $w={119} $h={40}>
        <InNotch />
        <Broom />
        <NodeName>Basic_Cleanse</NodeName>
        <PortArrow />
      </Node>
      <Node $x={566} $y={108} $w={179} $h={44} $selected>
        <InNotch dark />
        <BigTable empty />
        <NodeName $table>ZCOMPANYCODE1_TABLE</NodeName>
      </Node>
      <RedArrow $x={635} $y={42} width="32" height="50" viewBox="986 161 32 50">
        <path d="M1000 167 1003 184" stroke="#ff4242" strokeWidth="10" strokeLinecap="round" />
        <path d="M988 183 1017 178 1007 210Z" fill="#ff4242" />
      </RedArrow>
    </Canvas>
  </FlowColumn>
);

const TransformPalette = () => (
  <Palette>
    <PaletteTitle>Transforms</PaletteTitle>
    <Filter>
      <Funnel />
      <input aria-label="Filter transforms" placeholder="Filter pattern" />
    </Filter>
    <PaletteScroll>
      <PaletteTree>
        {groups.map((g) => (
          <React.Fragment key={g.name}>
            <PaletteRow $group>
              <Guide $line="full"><Toggle open /></Guide>
              <Dots $w={8} />
              <IconLift>{g.icon}</IconLift>
              <GroupLabel>{g.name}</GroupLabel>
            </PaletteRow>
            {g.items.map((it, i) => (
              <PaletteRow key={it.name}>
                <Guide $line="full" />
                <Spacer $w={10} />
                <Guide $line={i === g.items.length - 1 && g.name !== "Platform" ? "top" : "full"} />
                <Dots $w={9} />
                <IconLift>{it.icon}</IconLift>
                <PaletteLabel $selected={it.selected}>{it.name}</PaletteLabel>
              </PaletteRow>
            ))}
          </React.Fragment>
        ))}
      </PaletteTree>
      <ScrollV>
        <ScrollButton aria-label="Scroll up"><Tri d="up" /></ScrollButton>
        <ThumbV />
        <ScrollButton aria-label="Scroll down"><Tri d="down" /></ScrollButton>
      </ScrollV>
    </PaletteScroll>
  </Palette>
);

const InputSchemas = () => (
  <SchemaPane>
    <SlantStrip>
      <SlantTab $w={100} $front><SchemaTabIcon /><Text>Input schemas</Text></SlantTab>
      <Icon w={24} h={24}>
        <path d="M0 24V1Q3 1 5 4L23 24Z" fill={FACE} />
        <path d="M0 .5Q3 1 5 4L23 23.500H24" stroke="#a7a09e" />
      </Icon>
    </SlantStrip>
    <FilterRow>
      <Filter $boxed>
        <Funnel />
        <input aria-label="Filter input schemas" placeholder="Filter pattern" />
      </Filter>
      <Spacer />
      <ViewButton aria-label="Expand all"><Expand /></ViewButton>
      <ViewButton aria-label="Collapse all"><Expand up /></ViewButton>
    </FilterRow>
    <TableSlot>
      <GridTable>
        <colgroup>
          <col width="113" /><col width="97" /><col width="65" /><col />
        </colgroup>
        <thead>
          <tr><th>Name</th><th>Data type</th><th>Description</th><th>Con</th></tr>
        </thead>
        <tbody>
          <tr>
            <td colSpan={4}>
              <Cell $pad={7}><Toggle open /><Spacer $w={8} /><SchemaTable /><FieldName $gap={4}>Basic_Cleanse</FieldName></Cell>
            </td>
          </tr>
          {fields.map((f) => (
            <tr key={f.name}>
              <td><Cell $pad={47}><FieldIcon /><FieldName $gap={9}>{f.name}</FieldName></Cell></td>
              <td><Cell $pad={5}><TypeMark>{f.mark}</TypeMark><Text>{f.type}</Text></Cell></td>
              <td /><td />
            </tr>
          ))}
        </tbody>
      </GridTable>
    </TableSlot>
    <ScrollH>
      <ScrollButtonH aria-label="Scroll left"><Tri d="left" /></ScrollButtonH>
      <ThumbH />
      <ScrollButtonH aria-label="Scroll right"><Tri d="right" /></ScrollButtonH>
    </ScrollH>
  </SchemaPane>
);

const TableProperties = () => (
  <ColumnPane>
    <SlantStrip>
      <SlantTab $w={78}><TableIcon kind="loader" /><Text>Properties</Text></SlantTab>
      <Icon w={9} h={24}>
        <path d="M0 1.500Q5 2 9 7V23H0Z" fill="#cfc6c3" />
        <path d="M0 1.500Q4 2 9 8" stroke="#a7a09e" />
      </Icon>
      <SlantTab $w={71} $front><Spacer $w={1} /><ColumnsIcon /><Spacer $w={1} /><Text>Columns</Text></SlantTab>
      <Icon w={24} h={24}>
        <path d="M0 24V1L4 3 23 24Z" fill={FACE} />
        <path d="M0 .5Q3 1 5 4L23 23.500H24" stroke="#a7a09e" />
      </Icon>
      <Banner>
        <Icon w={38} h={22}>
          <path d="M0 0H38V22Q31 22 26 16L17 6Q12 1 0 0Z" fill="#1818ad" />
        </Icon>
        <BannerText><BannerIcon /><Text>ZCOMPANYCODE1_TABLE properties</Text></BannerText>
      </Banner>
    </SlantStrip>
    <FilterRow>
      <Filter $boxed>
        <Funnel />
        <input aria-label="Filter columns" placeholder="Filter pattern" />
      </Filter>
    </FilterRow>
    <TableSlot>
      <GridTable>
        <colgroup>
          <col width="70" /><col width="104" /><col width="49" /><col width="65" /><col width="76" /><col width="50" /><col />
        </colgroup>
        <thead>
          <tr><th>Name</th><th>Data type</th><th>Nullable</th><th>Description</th><th>Content type</th><th>Mapped</th><th /></tr>
        </thead>
      </GridTable>
      <GridTable $w={414}>
        <colgroup>
          <col width="70" /><col width="104" /><col width="49" /><col width="65" /><col width="76" /><col width="50" />
        </colgroup>
        <tbody>
          {fields.map((f, i) => (
            <FocusRow key={f.name} $focus={i === 0}>
              <td><Cell $pad={10}><FieldIcon /><FocusName $focus={i === 0}>{f.name}</FocusName></Cell></td>
              <td><Cell $pad={3}><TypeMark>{f.mark}</TypeMark><Spacer $w={5} /><Text>{f.type}</Text></Cell></td>
              <td><Cell><Check type="checkbox" defaultChecked aria-label={`${f.name} nullable`} /><Text>Yes</Text></Cell></td>
              <td /><td />
              <td><Cell $pad={1}><GreenTick /><FieldName $gap={8}>Yes</FieldName></Cell></td>
            </FocusRow>
          ))}
        </tbody>
      </GridTable>
    </TableSlot>
    <RedArrow $x={200} $y={172} width="75" height="80" viewBox="855 563 75 80">
      <path d="M862 636 906 586" stroke="#ff4242" strokeWidth="11" strokeLinecap="round" />
      <path d="M894 577 925 565 917 597Z" fill="#ff4242" />
    </RedArrow>
  </ColumnPane>
);

export default function App() {
  return (
    <>
      <Global />
      <Frame>
        <Main>
          <TitleBar>
            <Spacer $w={2} />
            <Logo />
            <Title>Data Services Workbench [connected to GNS:6400]</Title>
            <WinButtons>
              <WinButton aria-label="Minimize window">
                <Icon w={8} h={8} crisp><path d="M0 7H6" stroke="#000" strokeWidth="2" /></Icon>
              </WinButton>
              <WinButton aria-label="Maximize window">
                <Icon w={10} h={9} crisp><path d="M.5 1H9.500V8.500H.5ZM0 1H10" stroke="#000" /></Icon>
              </WinButton>
              <WinButton $gap aria-label="Close window">
                <Icon w={8} h={8}><path d="M.5.5 7.500 7.500M7.500.5.5 7.500" stroke="#000" strokeWidth="1.600" /></Icon>
              </WinButton>
            </WinButtons>
          </TitleBar>
          <MenuBar>
            {["File", "Edit", "Tools", "Window", "Help"].map((m) => <button key={m}>{m}</button>)}
          </MenuBar>
          <ToolBar>
            <Divider />
            <Spacer $w={2} />
            <ToolButton aria-label="New"><PageIcon /></ToolButton>
            <ToolButton $w={13} aria-label="New menu"><Caret /></ToolButton>
            <ToolButton aria-label="Save" disabled><Floppy /></ToolButton>
            <ToolButton aria-label="Save all" disabled><Floppy many /></ToolButton>
            <Divider />
            <ToolButton aria-label="Cut"><Scissors /></ToolButton>
            <ToolButton aria-label="Copy"><CopyIcon /></ToolButton>
            <ToolButton aria-label="Paste" disabled><PasteIcon /></ToolButton>
            <Divider />
            <ToolButton aria-label="Delete"><DeleteX /></ToolButton>
            <Divider />
            <ToolButton aria-label="Import object"><LinkObj /></ToolButton>
            <ToolButton aria-label="Schedule job"><JobIcon /></ToolButton>
            <Divider />
            <Spacer $w={26} />
            <Divider />
            <Spacer $w={3} />
            <ToolButton aria-label="Run"><Play /></ToolButton>
            <ToolButton aria-label="Validate"><DocCheck /></ToolButton>
            <ToolButton aria-label="Export ATL"><AtlIcon /></ToolButton>
          </ToolBar>
          <Workspace>
            <ProjectExplorer />
            <RightColumn>
              <Editor>
                <TabStrip>
                  <Tab $w={134}><DatastoreIcon /><Text>MSSQL.datastore</Text></Tab>
                  <Tab $w={201} $look="blue">
                    <FlowIcon />
                    <Text>DF_MSSQL_HANA_DC.dataflow</Text>
                    <TabClose $gap={5}><CloseX /></TabClose>
                  </Tab>
                  <Tab $w={252} $pad={5}><JobIcon /><Text>GNS.DF_MSSQL_HANA_DC_Job (Success)</Text></Tab>
                  <Tab $w={252} $pad={5}><JobIcon /><Text>GNS.DF_MSSQL_HANA_DC_Job (Success)</Text></Tab>
                  <StripRest>
                    <CutEdge>
                      <ViewButton aria-label="Minimize"><MinBox /></ViewButton>
                      <ViewButton aria-label="Maximize"><MaxBox /></ViewButton>
                    </CutEdge>
                  </StripRest>
                </TabStrip>
                <EditorFrame>
                  <TopSplit>
                    <FlowEditor />
                    <SideSash>
                      <SashHandle aria-label="Collapse palette"><Icon w={4} h={8}><path d="M0 0V8L4 4Z" fill="#000" /></Icon></SashHandle>
                    </SideSash>
                    <TransformPalette />
                  </TopSplit>
                  <MainSash>
                    <SashButtons>
                      <SashButton aria-label="Maximize lower pane"><Tri d="up" /></SashButton>
                      <SashButton $flat aria-label="Restore panes"><Icon w={10} h={2}><path d="M0 1H10" stroke="#7d7a78" strokeWidth="2" /></Icon></SashButton>
                      <SashButton aria-label="Maximize upper pane"><Tri d="down" /></SashButton>
                    </SashButtons>
                  </MainSash>
                  <LowerSplit>
                    <InputSchemas />
                    <SmallSash><Grip /></SmallSash>
                    <TableProperties />
                  </LowerSplit>
                </EditorFrame>
              </Editor>
              <Problems>
                <TabStrip>
                  <Tab $w={92} $look="soft"><ProblemsIcon /><Text>Problems</Text><TabClose><CloseX /></TabClose></Tab>
                  <Tab $w={127}><RefsIcon /><Text>References Analysis</Text></Tab>
                  <Tab $w={146}><CleanseIcon /><Text>Data Cleansing Solutions</Text></Tab>
                  <StripRest>
                    <CutEdge>
                      <ViewButton aria-label="View menu"><MenuTri /></ViewButton>
                      <ViewButton aria-label="Minimize"><MinBox /></ViewButton>
                      <ViewButton aria-label="Maximize"><MaxBox /></ViewButton>
                    </CutEdge>
                  </StripRest>
                </TabStrip>
                <Items>0 items</Items>
              </Problems>
            </RightColumn>
          </Workspace>
          <Pointer width="13" height="20" viewBox="0 0 13 20">
            <path d="M.5.5V16L4 12.500 6.500 18.500 9 17.500 6.500 11.500H11.500Z" fill="#fff" stroke="#000" />
          </Pointer>
        </Main>
        <OuterV>
          <OuterArrow $w={15} $h={18} aria-label="Page up"><Tri d="up" c="#404040" /></OuterArrow>
          <OuterThumb $side>
            <Icon w={8} h={8} crisp><path d="M0 .5H7M0 3.500H7M0 6.500H7" stroke="#55555a" /><path d="M0 1.500H7M0 4.500H7M0 7.500H7" stroke="#fff" /></Icon>
          </OuterThumb>
          <OuterRest $n={68} />
          <OuterArrow $w={15} $h={17} aria-label="Page down"><Tri d="down" c="#404040" /></OuterArrow>
        </OuterV>
        <OuterH>
          <OuterArrow $w={16} $h={16} aria-label="Page left"><Tri d="left" c="#404040" /></OuterArrow>
          <OuterThumb>
            <Icon w={8} h={8} crisp><path d="M.5 0V7M3.500 0V7M6.500 0V7" stroke="#55555a" /><path d="M1.500 0V7M4.500 0V7M7.500 0V7" stroke="#fff" /></Icon>
          </OuterThumb>
          <OuterRest $n={15} />
          <OuterArrow $w={18} $h={16} aria-label="Page right"><Tri d="right" c="#404040" /></OuterArrow>
        </OuterH>
        <span />
      </Frame>
    </>
  );
}
